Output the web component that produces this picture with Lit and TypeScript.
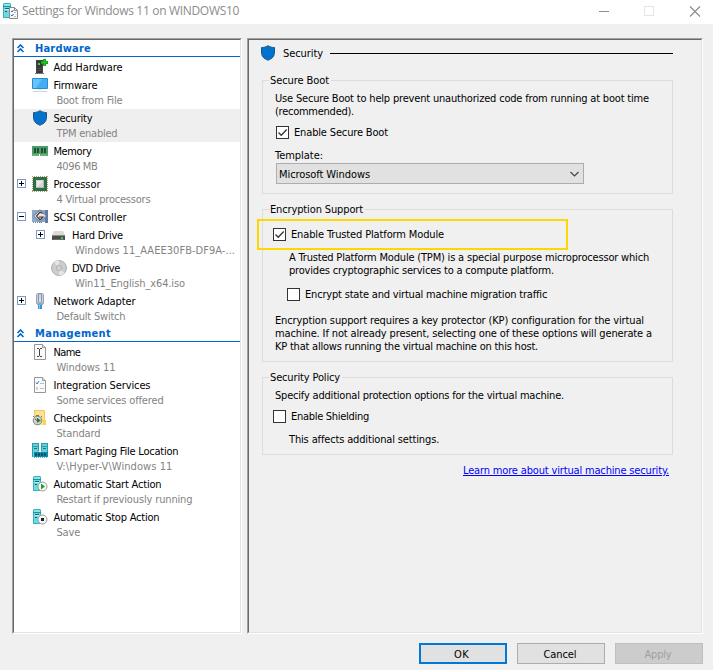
import { LitElement, html, css, svg, nothing, TemplateResult } from "lit";
import { customElement, property, state } from "lit/decorators.js";
import { classMap } from "lit/directives/class-map.js";

/** One line of text, tracked so that it spans exactly `span` pixels. */
@customElement("fit-text")
class FitText extends LitElement {
  @property() text = "";
  @property({ type: Number }) span = 0;
  @state() private tracking = 0;

  static styles = css`
    :host { display: inline-block; white-space: pre; }
  `;

  firstUpdated() {
    const el = this.renderRoot.querySelector("span")!;
    const natural = el.getBoundingClientRect().width;
    if (this.span) this.tracking = (this.span - natural) / this.text.length;
  }

  render() {
    return html`<span style="letter-spacing:${this.tracking}px">${this.text}</span>`;
  }
}

const t = (text: string, span: number) => html`<fit-text .text=${text} .span=${span}></fit-text>`;

const server = svg`
  <path d="M2 0h6l1 1v13l-1 1H1V1z" fill="#35b3bf"/>
  <path d="M2 1h6v2H2z" fill="#8be6ea"/><path d="M2 4h6v10H2z" fill="#6fd9e0"/>
  <path d="M1 3.500h8" stroke="#1f8f9b"/><path d="M3 5.500h4M3 8.500h2" stroke="#14616f"/><path d="M3 6.500h4" stroke="#c4f6f8"/>`;

const page = svg`
  <path d="M2.500.5h8l3 3v12h-11z" fill="#fafafa" stroke="#969696"/><path d="M10.500.5v3h3" fill="#e6e6e6" stroke="#969696"/>`;

const icons: Record<string, TemplateResult> = {
  app: svg`${server}<path d="M7.500 4.500h5l3 3v8h-8z" fill="#f8f8f8" stroke="#8a8a8a"/><path d="M12.500 4.500v3h3" fill="none" stroke="#8a8a8a"/>
    <path d="M9 8l1 1 1.500-2M9 12l1 1 1.500-2" fill="none" stroke="#1c74c8"/><path d="M12 9.500h2M12 13.500h2" stroke="#bbb"/>`,
  add: svg`<path d="M4 1h7v14H4z" fill="#444"/><path d="M5 2h5v12H5z" fill="#383838"/><path d="M3 14h9v1H3z" fill="#777"/><path d="M5 9.500h5M5 11.500h5" stroke="#4c4c4c"/>
    <path d="M6 4h2v2H6z" fill="#28e23b"/><path d="M11 0h3v2h2v3h-2v2h-3V5H9V2h2z" fill="#10a812"/><path d="M12 1h1v2h2v1h-2v2h-1V4h-2V3h2z" fill="#25ca22"/>`,
  monitor: svg`<path d="M.5 1.500h15v10H.5z" fill="#43aef3" stroke="#2c8bcb"/><path d="M1 2h9L4 11H1z" fill="#65c4fa"/><path d="M6 12h4v1H6z" fill="#dce8ef"/><path d="M1 14.500h14" stroke="#ccd3d9"/>`,
  shield: svg`<path d="M8 .7C10 2 12 2.500 14.500 2.600V7c0 4-2 6.500-6.500 8.200C3.500 13.500 1.500 11 1.500 7V2.600C4 2.500 6 2 8 .7z" fill="#0173cf" stroke="#1a568a"/>`,
  memory: svg`<path d="M0 3h16v8H0z" fill="#46a169"/><path d="M0 11h7v2H0zM8 11h8v2H8z" fill="#5cae77"/>
    <path d="M2 5h2v5H2zM5 5h2v5H5zM9 5h2v5H9zM12 5h2v5h-2z" fill="#2b4a3c"/><path d="M1 12.500h6M9 12.500h6" stroke="#b9ab5c" stroke-dasharray="1 1"/>`,
  cpu: svg`<path d="M.5 0v16M15.500 0v16M0 .5h16M0 15.500h16" stroke="#b9a05a" stroke-dasharray="1 1"/>
    <path d="M1 1h14v14H1z" fill="#2d6e4b"/><path d="M4 4h8v8H4z" fill="#d3d6d4"/><path d="M4 11.500h8M11.500 4v8" stroke="#b3b8b5"/><path d="M5 5h6l-6 6z" fill="#e9ebea"/>`,
  scsi: svg`<path d="M0 1h16v12H0z" fill="#8fa8cb"/><path d="M13 1h3v13h-3z" fill="#5f7ba6"/><path d="M1 13.500h10" stroke="#6b84aa" stroke-dasharray="1 1"/>
    <path d="M8 .8L14.500 7 8 13.400 1.500 7z" fill="#e2e4e6" stroke="#5d6b7d"/><path d="M10.500 4.500L8 3 4.500 7 8 11l3-3H7" fill="none" stroke="#3c3c3c" stroke-width="1.200"/>`,
  disk: svg`<path d="M3 4h9l2 4H1z" fill="#dadada"/><path d="M1 8h13v5H1z" fill="#4c4c4c"/><path d="M1 8.500h13" stroke="#8d8d8d"/><path d="M10 10h2v2h-2z" fill="#31d955"/><path d="M2 12.500h11" stroke="#6c6c6c"/>`,
  dvd: svg`<circle cx="8" cy="8" r="7.500" fill="#cdcdcd" stroke="#b0b0b0"/><path d="M8 8L3 2a8 8 0 0 1 5-1.500zM8 8l5.500 5A8 8 0 0 1 8 15.500z" fill="#e6e6e6"/>
    <circle cx="8" cy="8" r="2.800" fill="#dedede" stroke="#b2b2b2"/><circle cx="8" cy="8" r="1.200" fill="#fff" stroke="#999" stroke-width=".6"/>`,
  net: svg`<path d="M4.500 1.500l1-1h5l1 1v9h-7z" fill="#ccd5df" stroke="#8fa2ba"/><path d="M6.500 1v8h3V1z" fill="#f1f4f8" stroke="#8595a8"/><path d="M8 2v5" stroke="#b5c0cd"/>
    <path d="M5 10h6v2H5z" fill="#91a4b8"/><path d="M6 12h4v4H6z" fill="#2c9ad4"/><path d="M7 12h1v4H7z" fill="#72cdf1"/>`,
  name: svg`${page}<path d="M5 4.500h2M8 4.500h2M5 12.500h2M8 12.500h2M7.500 5v7" stroke="#444"/>`,
  services: svg`${page}<path d="M4 5.500l1 1.500 2-3" fill="none" stroke="#2384d5"/><path d="M8 6.500h4M8 11.500h4" stroke="#b0bfcc"/><path d="M4 10h2v3H4z" fill="#c5d3de"/>`,
  checkpoint: svg`<path d="M2 0h11v10h1v5H2z" fill="#ffe18a"/><path d="M2.500 0v14M12.500 1v9M2 .5h10" stroke="#ecca62"/><path d="M11 10h3v5h-3z" fill="#f9d35a"/>
    <circle cx="5.500" cy="10.500" r="4.300" fill="#d2d2d2" stroke="#858585"/><path d="M4 5.500h3M2 6l-1 1M9 6l1 1" stroke="#777"/><path d="M5 8l4 2.500L5 13z" fill="#188d32"/><path d="M3 9l2.500 2V8" fill="none" stroke="#555"/>`,
  paging: svg`<path d="M0 0h7v14H0zM9 0h7v14H9z" fill="#63d3db"/><path d="M0 .5h7M9 .5h7M0 3.500h7M9 3.500h7M.5 0v14M6.500 0v8M9.500 0v8M15.500 0v14" stroke="#2b9ca8"/><path d="M2 5.500h3M11 5.500h3" stroke="#177686"/>
    <path d="M2 9h14v5H2z" fill="#0d8ba8"/><path d="M3 11.500h12" stroke="#123d5c" stroke-width="2" stroke-dasharray="2 1"/><path d="M2 14.500h14" stroke="#4fbdd0" stroke-dasharray="1 1"/>`,
  start: svg`${server}<circle cx="10.500" cy="10.500" r="4.500" fill="#f7f7f7" stroke="#999"/><path d="M9 7.500l4 3-4 3z" fill="#18a526"/>`,
  stop: svg`${server}<circle cx="10.500" cy="10.500" r="4.500" fill="#f7f7f7" stroke="#999"/><path d="M9 9h3v3H9z" fill="#222"/>`,
};

const icon = (name: string) => html`<svg class="icon" viewBox="0 0 16 16" width="16" height="16">${icons[name]}</svg>`;

interface Node {
  icon: string; title: [string, number]; sub?: [string, number];
  box?: "+" | "-"; nested?: boolean; selected?: boolean;
}

const hardware: Node[] = [
  { icon: "add", title: ["Add Hardware", 69] },
  { icon: "monitor", title: ["Firmware", 44], sub: ["Boot from File", 66] },
  { icon: "shield", title: ["Security", 39], sub: ["TPM enabled", 61], selected: true },
  { icon: "memory", title: ["Memory", 38], sub: ["4096 MB", 41] },
  { icon: "cpu", title: ["Processor", 47], sub: ["4 Virtual processors", 94], box: "+" },
  { icon: "scsi", title: ["SCSI Controller", 73], box: "-" },
  { icon: "disk", title: ["Hard Drive", 51], sub: ["Windows 11_AAEE30FB-DF9A-...", 160], box: "+", nested: true },
  { icon: "dvd", title: ["DVD Drive", 48], sub: ["Win11_English_x64.iso", 110], nested: true },
  { icon: "net", title: ["Network Adapter", 82], sub: ["Default Switch", 69], box: "+" },
];

const management: Node[] = [
  { icon: "name", title: ["Name", 27], sub: ["Windows 11", 59] },
  { icon: "services", title: ["Integration Services", 97], sub: ["Some services offered", 107] },
  { icon: "checkpoint", title: ["Checkpoints", 58], sub: ["Standard", 44] },
  { icon: "paging", title: ["Smart Paging File Location", 125], sub: ["V:\\Hyper-V\\Windows 11", 116] },
  { icon: "start", title: ["Automatic Start Action", 108], sub: ["Restart if previously running", 136] },
  { icon: "stop", title: ["Automatic Stop Action", 106], sub: ["Save", 24] },
];

@customElement("app-root")
class AppRoot extends LitElement {
  static styles = css`
    :host {
      display: flex; flex-direction: column; width: 713px; height: 670px; overflow: hidden;
      background: #f0f0f0; color: #000;
      font: 11px/13px "DejaVu Sans Condensed", "DejaVu Sans", sans-serif;
    }
    * { box-sizing: border-box; }
    svg { display: block; flex: none; }
    .titlebar { display: flex; height: 24px; background: #fff; padding-left: 2px; }
    .titlebar .icon { margin: 3px 4px 0 0; }
    .caption { font: 12px/22px "Open Sans", "Noto Sans", sans-serif; color: #8c8c8c; flex: 1; }
    .main { display: flex; gap: 5px; margin: 14px 0 0 12px; height: 596px; }
    .sunken { border: 1px solid; border-color: #a0a0a0 #fff #fff #a0a0a0; }
    .inner { height: 100%; border: 1px solid; border-color: #696969 #e3e3e3 #e3e3e3 #696969; }
    .tree { width: 230px; background: #fff; }
    .pane { width: 456px; }
    .head { display: flex; height: 17px; margin-bottom: 1px; border-bottom: 1px solid #0066cc; color: #0066cc; font-weight: bold; line-height: 18px; padding-left: 2px; }
    .head svg { margin: 4px 10px 0 0; }
    .node { display: flex; height: 18px; padding-left: 3px; }
    .node.tall { height: 33px; }
    .node.nested { padding-left: 22px; }
    .node.selected { background: #efefef; }
    .slot { width: 15px; flex: none; padding-top: 4px; }
    .node .icon { margin-top: 1px; }
    .labels { padding-left: 5.4px; line-height: 20px; }
    .nested .labels { padding-left: 5px; }
    .labels fit-text { display: block; }
    .sub { color: #838383; line-height: 13px; padding-left: 3px; margin-top: -2px; }
    .heading { display: flex; align-items: center; height: 26px; padding-left: 11px; }
    .heading .icon { margin-right: 7px; }
    .rule { height: 1px; width: 343px; background: #000; margin-left: 7px; }
    .group { position: relative; width: 411px; margin-left: 13px; border: 1px solid #dcdcdc; padding-left: 12px; }
    .legend { position: absolute; left: 6px; top: -7px; background: #f0f0f0; padding: 0 2px 0 1px; }
    .boot { height: 114px; margin-top: 14px; padding-top: 11px; }
    .crypto { height: 153px; margin-top: 15px; padding-top: 18px; }
    .policy { height: 78px; margin-top: 15px; padding-top: 11px; }
    .para fit-text { display: block; }
    .check { display: flex; height: 13px; gap: 5px; }
    .tick { width: 13px; height: 13px; background: #fff; border: 1px solid #333; flex: none; }
    .check fit-text { line-height: 14px; }
    .boot .check { margin: 8px 0 10px 1px; }
    .combo { display: flex; justify-content: space-between; align-items: center; width: 308px; height: 21px; margin: 1px 0 0 1px; padding: 0 4px 0 2px; background: #e1e1e1; border: 1px solid #adadad; }
    .combo fit-text { margin-top: 2px; }
    .out { margin-left: -2px; }
    .in { margin-left: 14px; }
    .crypto .para.in { margin: 10px 0 11px 14px; }
    .crypto .check.in { margin: 0 0 13px 12px; }
    .policy .out { margin: 8px 0 10px -2px; }
    .mark { position: absolute; left: -6px; top: 9px; width: 311px; height: 31px; border: 2px solid #ffd700; }
    .link { display: flex; justify-content: flex-end; padding-right: 32px; margin-top: 9px; color: #0000ff; }
    .link fit-text { text-decoration: underline; }
    .buttons { display: flex; justify-content: flex-end; gap: 10px; padding: 9px 10px 0 0; }
    .btn { width: 88px; height: 21px; border: 1px solid #adadad; background: #e1e1e1; display: flex; align-items: center; justify-content: center; padding: 2px 2px 0 0; }
    .btn.ok { border: 2px solid #0078d7; padding-right: 3px; }
    .btn.off { background: #ccc; border-color: #bfbfbf; color: #a0a0a0; }
  `;

  private head(title: string, span: number) {
    return html`<div class="head">
      <svg width="9" height="10" viewBox="0 0 9 10"><path d="M1.500 4l3-3 3 3M1.500 8l3-3 3 3" fill="none" stroke="#0066cc" stroke-width="1.600"/></svg>
      ${t(title, span)}</div>`;
  }

  private node(n: Node) {
    const cls = { node: true, tall: !!n.sub, nested: !!n.nested, selected: !!n.selected };
    return html`<div class=${classMap(cls)}>
      <div class="slot">${n.box ? html`<svg width="9" height="9"><rect x=".5" y=".5" width="8" height="8" fill="#fff" stroke="#7b9ac4"/>
        <path d=${n.box === "+" ? "M2 4.500h5M4.500 2v5" : "M2 4.500h5"} stroke="#000"/></svg>` : nothing}</div>
      ${icon(n.icon)}
      <div class="labels">${t(...n.title)}${n.sub ? html`<div class="sub">${t(...n.sub)}</div>` : nothing}</div>
    </div>`;
  }

  private check(cls: string, on: boolean, text: string, span: number) {
    return html`<div class="check ${cls}"><div class="tick">${on
      ? html`<svg width="11" height="11"><path d="M1.500 5.500l2.700 2.700 5.500-5.700" fill="none" stroke="#333" stroke-width="1.300"/></svg>` : nothing}</div>${t(text, span)}</div>`;
  }

  render() {
    return html`
      <div class="titlebar">
        ${icon("app")}
        <div class="caption">${t("Settings for Windows 11 on WINDOWS10", 217)}</div>
        <svg width="116" height="24"><path d="M2 11.500h10" stroke="#8c8c8c"/><rect x="47.500" y="6.500" width="9" height="9" fill="none" stroke="#e5e5e5"/>
          <path d="M93 6.500l10 10M103 6.500l-10 10" stroke="#888" stroke-width="1.100"/></svg>
      </div>
      <div class="main">
        <div class="sunken tree"><div class="inner">
          ${this.head("Hardware", 56)}${hardware.map((n) => this.node(n))}
          ${this.head("Management", 76)}${management.map((n) => this.node(n))}
        </div></div>
        <div class="sunken pane"><div class="inner">
          <div class="heading">${icon("shield")}${t("Security", 40)}<div class="rule"></div></div>
          <div class="group boot">
            <div class="legend">${t("Secure Boot", 59)}</div>
            <div class="para">
              ${t("Use Secure Boot to help prevent unauthorized code from running at boot time", 374)}
              ${t("(recommended).", 79)}
            </div>
            ${this.check("", true, "Enable Secure Boot", 94)}
            <div>${t("Template:", 48)}</div>
            <div class="combo">${t("Microsoft Windows", 91)}
              <svg width="9" height="6"><path d="M.5 1l4 4 4-4" fill="none" stroke="#444" stroke-width="1.200"/></svg></div>
          </div>
          <div class="group crypto">
            <div class="legend">${t("Encryption Support", 93)}</div>
            <div class="mark"></div>
            ${this.check("out", true, "Enable Trusted Platform Module", 153)}
            <div class="para in">
              ${t("A Trusted Platform Module (TPM) is a special purpose microprocessor which", 360)}
              ${t("provides cryptographic services to a compute platform.", 265)}
            </div>
            ${this.check("in", false, "Encrypt state and virtual machine migration traffic", 242)}
            <div class="para">
              ${t("Encryption support requires a key protector (KP) configuration for the virtual", 369)}
              ${t("machine. If not already present, selecting one of these options will generate a", 377)}
              ${t("KP that allows running the virtual machine on this host.", 263)}
            </div>
          </div>
          <div class="group policy">
            <div class="legend">${t("Security Policy", 70)}</div>
            ${t("Specify additional protection options for the virtual machine.", 289)}
            ${this.check("out", false, "Enable Shielding", 78)}
            <div class="in">${t("This affects additional settings.", 150)}</div>
          </div>
          <div class="link">${t("Learn more about virtual machine security.", 206)}</div>
        </div></div>
      </div>
      <div class="buttons">
        <div class="btn ok">${t("OK", 15)}</div>
        <div class="btn">${t("Cancel", 33)}</div>
        <div class="btn off">${t("Apply", 27)}</div>
      </div>`;
  }
}
